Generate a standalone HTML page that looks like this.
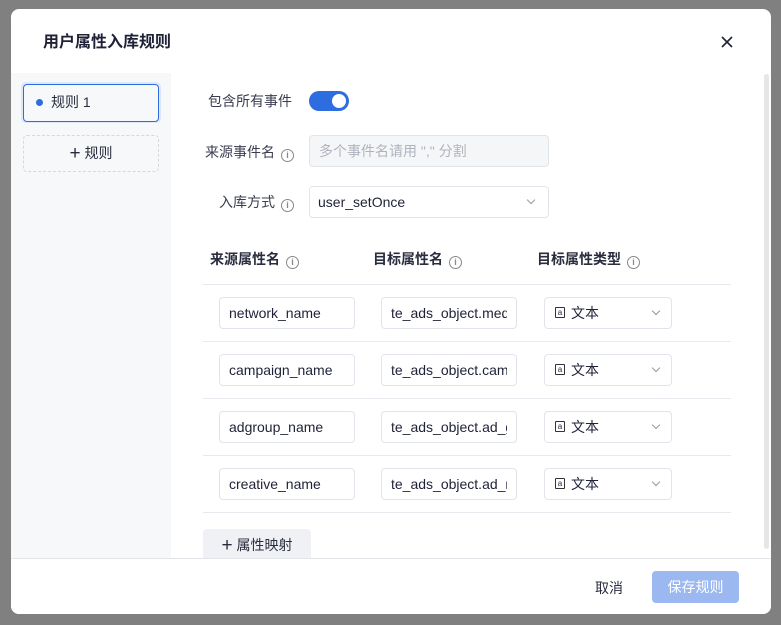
<!DOCTYPE html>
<html><head><meta charset="utf-8"><style>
*{box-sizing:border-box;margin:0;padding:0}
body{width:781px;height:625px;background:#808080;font-family:"Liberation Sans","Noto Sans CJK SC",sans-serif;position:relative;overflow:hidden;color:#1f2237}
.a{position:absolute}
.modal{left:11px;top:9px;width:760px;height:605px;background:#fff;border-radius:8px;overflow:hidden}
.title{left:32px;top:19px;font-size:16px;font-weight:bold;color:#1f2237}
.side{left:0;top:64px;width:160px;height:486px;background:#f7f8fa}
.lbl{font-size:14px;color:#3a3d50;text-align:right;width:120px}
.info{display:inline-block;width:13px;height:13px;border:1px solid #888;border-radius:50%;font-size:9px;line-height:11px;text-align:center;color:#888;margin-left:6px;vertical-align:-1px;font-weight:bold}
.inp{border:1px solid #e2e4ec;border-radius:4px;height:32px;font-size:14px;line-height:30px;padding-left:9px;white-space:nowrap;overflow:hidden;background:#fff}
.clip{display:block;overflow:hidden;width:100%}
.hline{left:192px;width:528px;height:1px;background:#e8e9ef}
.th{font-size:14px;font-weight:bold;color:#2a2d3e}
.chev{position:absolute;right:12px;top:10px;width:6px;height:6px;border-right:1px solid #999;border-bottom:1px solid #999;transform:rotate(45deg)}
.ic{position:absolute;left:10px;top:9px;width:10px;height:11px;border:1px solid #333;border-radius:1px;font-size:8px;line-height:9px;text-align:center}
.ty{padding-left:26px}
</style></head><body>
<div class="a modal">
<div class="a title">用户属性入库规则</div>
<svg class="a" style="left:709px;top:26px" width="14" height="14" viewBox="0 0 14 14"><path d="M2 2L12 12M12 2L2 12" stroke="#1f2237" stroke-width="1.6"/></svg>
<div class="a side"></div>
<div class="a" style="left:10px;top:73px;width:140px;height:41px;background:#dde8fb;border-radius:5px"></div>
<div class="a" style="left:12px;top:75px;width:136px;height:38px;border:1.5px solid #2e6de0;border-radius:4px;background:#f7f8fa;font-size:14px;line-height:35px;padding-left:27px;color:#2a2d3e">规则 1</div>
<div class="a" style="left:25px;top:90px;width:7px;height:7px;border-radius:50%;background:#2e6de0"></div>
<div class="a" style="left:12px;top:126px;width:136px;height:37px;border:1px dashed #d6d8e0;border-radius:4px;font-size:14px;line-height:35px;text-align:center;color:#2a2d3e"><span style="font-size:19px;vertical-align:-1px">+</span> 规则</div>

<div class="a lbl" style="left:161px;top:82px">包含所有事件</div>
<div class="a" style="left:298px;top:82px;width:40px;height:20px;border-radius:10px;background:#2e6de0"></div>
<div class="a" style="left:321px;top:85px;width:14px;height:14px;border-radius:50%;background:#fff"></div>

<div class="a lbl" style="left:163px;top:133px">来源事件名<span class="info">i</span></div>
<div class="a inp" style="left:298px;top:126px;width:240px;background:#f5f6f8;color:#b0b3bf">多个事件名请用 "," 分割</div>

<div class="a lbl" style="left:163px;top:183px">入库方式<span class="info">i</span></div>
<div class="a inp" style="left:298px;top:177px;width:240px;padding-left:8px">user_setOnce<span class="chev" style="right:14px"></span></div>

<div class="a th" style="left:199px;top:240px">来源属性名<span class="info">i</span></div>
<div class="a th" style="left:362px;top:240px">目标属性名<span class="info">i</span></div>
<div class="a th" style="left:526px;top:240px">目标属性类型<span class="info">i</span></div>
<div class="a hline" style="top:275px"></div>

<div class="a inp" style="left:208px;top:288px;width:136px">network_name</div>
<div class="a inp" style="left:370px;top:288px;width:136px;padding-right:9px"><span class="clip">te_ads_object.media_source</span></div>
<div class="a inp ty" style="left:533px;top:288px;width:128px"><span class="ic">a</span>文本<span class="chev"></span></div>
<div class="a hline" style="top:332px"></div>

<div class="a inp" style="left:208px;top:345px;width:136px">campaign_name</div>
<div class="a inp" style="left:370px;top:345px;width:136px;padding-right:9px"><span class="clip">te_ads_object.campaign</span></div>
<div class="a inp ty" style="left:533px;top:345px;width:128px"><span class="ic">a</span>文本<span class="chev"></span></div>
<div class="a hline" style="top:389px"></div>

<div class="a inp" style="left:208px;top:402px;width:136px">adgroup_name</div>
<div class="a inp" style="left:370px;top:402px;width:136px;padding-right:9px"><span class="clip">te_ads_object.ad_group</span></div>
<div class="a inp ty" style="left:533px;top:402px;width:128px"><span class="ic">a</span>文本<span class="chev"></span></div>
<div class="a hline" style="top:446px"></div>

<div class="a inp" style="left:208px;top:459px;width:136px">creative_name</div>
<div class="a inp" style="left:370px;top:459px;width:136px;padding-right:9px"><span class="clip">te_ads_object.ad_name</span></div>
<div class="a inp ty" style="left:533px;top:459px;width:128px"><span class="ic">a</span>文本<span class="chev"></span></div>
<div class="a hline" style="top:503px"></div>

<div class="a" style="left:192px;top:520px;width:108px;height:32px;background:#f0f1f5;border-radius:4px;font-size:14px;line-height:32px;text-align:center;color:#2a2d3e"><span style="font-size:19px;vertical-align:-1px">+</span> 属性映射</div>
<div class="a" style="left:753px;top:65px;width:5px;height:475px;background:#e6e6e6;border-radius:3px"></div>

<div class="a" style="left:0;top:549px;width:760px;height:56px;background:#fff;border-top:1px solid #e3e4ea"></div>
<div class="a" style="left:584px;top:569px;font-size:14px;color:#2a2d3e">取消</div>
<div class="a" style="left:641px;top:562px;width:87px;height:32px;background:#9bb8f1;border-radius:4px;color:#fff;font-size:14px;line-height:32px;text-align:center">保存规则</div>
</div>
</body></html>
